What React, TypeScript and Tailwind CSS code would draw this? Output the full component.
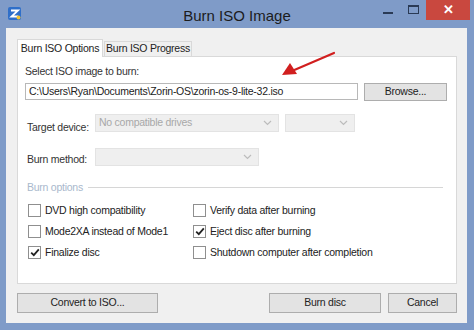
import React from 'react';

const Chevron: React.FC<{ className?: string }> = ({ className }) => (
  <svg className={className} width="9" height="6" viewBox="0 0 9 6" fill="none">
    <path d="M1 1l3.5 3.5L8 1" stroke="#bcbcbc" strokeWidth="1.2" />
  </svg>
);

const Select: React.FC<{ width: string; text?: string }> = ({ width, text }) => (
  <div className={`${width} h-[18px] bg-[#efefef] border border-[#e3e3e3] flex items-center justify-between pl-[3px] pr-[6px]`}>
    <span className="text-[#a8a8a8]">{text}</span>
    <Chevron />
  </div>
);

const Check: React.FC<{ checked?: boolean; label: string }> = ({ checked, label }) => (
  <div className="flex items-center h-[21px]">
    <div className="w-[13px] h-[13px] border border-[#8f8f8f] bg-white flex items-center justify-center">
      {checked && (
        <svg width="10" height="9" viewBox="0 0 10 9">
          <path d="M1.2 4.6l2.6 2.6L8.8 1.4" stroke="#222" strokeWidth="1.8" fill="none" />
        </svg>
      )}
    </div>
    <span className="ml-[4px] text-[#222]">{label}</span>
  </div>
);

const Button: React.FC<{ width: string; height?: string; children: React.ReactNode }> = ({ width, height = 'h-[20px]', children }) => (
  <div className={`${width} ${height} bg-[#e3e3e3] border border-[#adadad] flex items-center justify-center text-[#222]`}>
    {children}
  </div>
);

export default function App() {
  return (
    <div
      className="relative w-[474px] h-[330px] bg-[#7f9bc8] flex flex-col text-[10.5px] tracking-[-0.25px] whitespace-nowrap overflow-hidden"
      style={{ fontFamily: '"Liberation Sans", Arial, sans-serif' }}
    >
      {/* Title bar */}
      <div className="h-[28px] flex items-start relative">
        <div className="ml-[8px] mt-[7px] w-[13px] h-[13px]">
          <svg width="13" height="13" viewBox="0 0 13 13">
            <rect x="0" y="0" width="13" height="13" rx="2" fill="#2f6fc9" />
            <path d="M3 3.5h7L3.5 9.5H10" stroke="#fff" strokeWidth="1.8" fill="none" />
            <circle cx="10.5" cy="10.5" r="2" fill="#f5c431" />
          </svg>
        </div>
        <div className="absolute left-0 right-0 top-[5px] text-center text-[15px] tracking-normal text-[#1c1c1c]">Burn ISO Image</div>
        <div className="ml-auto flex items-start">
          <div className="w-[10px] h-[2px] bg-[#2a3a55] mt-[12px] mr-[15px]" />
          <div className="w-[11px] h-[9px] border border-[#2a3a55] mt-[5px] mr-[7px] border-t-2" />
          <div className="w-[44px] h-[20px] bg-[#c9483f] flex items-center justify-center text-white text-[13px] font-bold mr-[4px]">
            ✕
          </div>
        </div>
      </div>

      {/* Client area */}
      <div className="ml-[6px] mr-[7px] mb-[7px] flex-1 bg-[#f0f0f0] flex flex-col pl-[11px] pr-[10px] pt-[10px]">
        {/* Tabs */}
        <div className="flex items-end h-[18px]">
          <div className="w-[86px] h-[18px] bg-white border border-b-0 border-[#d9d9d9] flex items-center justify-center text-[#222] relative z-10 -mb-px">
            Burn ISO Options
          </div>
          <div className="w-[88px] h-[15px] bg-[#f0f0f0] border border-b-0 border-[#d9d9d9] flex items-center justify-center text-[#222] ml-[1px]">
            Burn ISO Progress
          </div>
        </div>

        {/* Tab panel */}
        <div className="h-[228px] bg-white border border-[#d9d9d9] pl-[7px] pr-[8px] pt-[8px]">
          <div className="h-[13px] leading-[13px] text-[#333]">Select ISO image to burn:</div>
          <div className="flex items-start mt-[5px]">
            <div className="w-[333px] h-[17px] border border-[#b8b8b8] flex items-center pl-[3px] text-[#222]">
              C:\Users\Ryan\Documents\Zorin-OS\zorin-os-9-lite-32.iso
            </div>
            <div className="ml-[6px]">
              <Button width="w-[83px]" height="h-[18px]">Browse...</Button>
            </div>
          </div>

          <div className="flex items-start h-[18px] mt-[13px]">
            <span className="w-[70px] pl-[2px] mt-[6px] text-[#333]">Target device:</span>
            <Select width="w-[184px]" text="No compatible drives" />
            <div className="ml-[6px]">
              <Select width="w-[70px]" />
            </div>
          </div>

          <div className="flex items-start h-[18px] mt-[16px]">
            <span className="w-[70px] pl-[2px] mt-[4px] text-[#333]">Burn method:</span>
            <Select width="w-[164px]" />
          </div>

          <div className="flex items-center h-[13px] mt-[15px] pl-[2px]">
            <span className="text-[#a9b8cc]">Burn options</span>
            <div className="flex-1 h-px bg-[#d6d6d6] ml-[5px] mr-[5px]" />
          </div>

          <div className="flex mt-[6px] pl-[3px]">
            <div className="w-[165px] flex flex-col">
              <Check label="DVD high compatibility" />
              <Check label="Mode2XA instead of Mode1" />
              <Check checked label="Finalize disc" />
            </div>
            <div className="flex flex-col">
              <Check label="Verify data after burning" />
              <Check checked label="Eject disc after burning" />
              <Check label="Shutdown computer after completion" />
            </div>
          </div>
        </div>

        {/* Bottom buttons */}
        <div className="flex items-center mt-[9px]">
          <Button width="w-[141px]">Convert to ISO...</Button>
          <div className="ml-auto flex">
            <Button width="w-[112px]">Burn disc</Button>
            <div className="ml-[7px]">
              <Button width="w-[69px]">Cancel</Button>
            </div>
          </div>
        </div>
      </div>

      {/* Red annotation arrow */}
      <svg className="absolute left-[278px] top-[50px]" width="62" height="30" viewBox="0 0 62 30">
        <path d="M56 3L14 21" stroke="#d11f1f" strokeWidth="2.2" strokeLinecap="round" />
        <path d="M4 25L12 13L19 24Z" fill="#d11f1f" />
      </svg>
    </div>
  );
}
